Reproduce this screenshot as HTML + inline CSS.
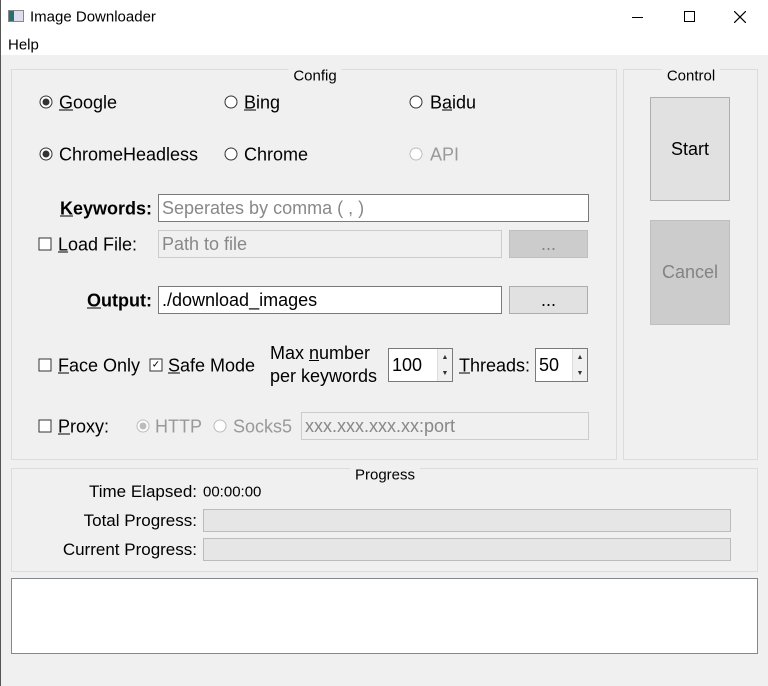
<!DOCTYPE html>
<html><head><style>
*{box-sizing:border-box;margin:0;padding:0}
body{width:768px;height:686px;background:#f0f0f0;font-family:"Liberation Sans",sans-serif;font-size:18px;color:#000;position:relative;overflow:hidden}
.a{position:absolute;white-space:nowrap}
.t{transform:translateY(-50%)}
.grp{position:absolute;border:1px solid #dcdcdc}
.gt{position:absolute;background:#f0f0f0;font-size:15px;padding:0 5px;transform:translate(-50%,-50%)}
.rad{position:absolute;width:13px;height:13px;border:1px solid #333;border-radius:50%;background:#fff;transform:translate(-50%,-50%)}
.rad.on::after{content:"";position:absolute;left:2px;top:2px;width:7px;height:7px;border-radius:50%;background:#333}
.rad.dis{border-color:#bcbcbc}
.rad.dis.on::after{background:#bcbcbc}
.chk{position:absolute;width:13px;height:13px;border:1px solid #333;background:#fff;transform:translate(-50%,-50%)}
.inp{position:absolute;background:#fff;border:1px solid #7a7a7a;padding-left:3px;display:flex;align-items:center}
.inp.dis{background:#f0f0f0;border-color:#ccc;color:#888}
.btn{position:absolute;background:#e1e1e1;border:1px solid #adadad;display:flex;align-items:center;justify-content:center}
.btn.dis{background:#ccc;border-color:#bfbfbf;color:#838383}
.bar{position:absolute;background:#e6e6e6;border:1px solid #bcbcbc;left:203px;width:528px;height:23px}
u{text-decoration:underline}
.sp{position:absolute;right:0;top:0;width:15px;height:100%;border-left:1px solid #ddd;font-size:7px;color:#333;display:flex;flex-direction:column;align-items:center;justify-content:space-around;background:#f0f0f0}
</style></head><body>
<div class="a" style="left:0;top:0;width:768px;height:55px;background:#fff"></div>
<div class="a" style="left:0;top:0;width:1px;height:686px;background:#555"></div>
<div class="a" style="left:8px;top:10px;width:16px;height:12px;border:1px solid #888;background:linear-gradient(90deg,#2a6f6f 0 5px,#dde 5px)"></div>
<div class="a t" style="left:30px;top:17px;font-size:15px">Image Downloader</div>
<div class="a" style="left:632px;top:17px;width:11px;height:1px;background:#000"></div>
<div class="a" style="left:684px;top:11px;width:11px;height:11px;border:1px solid #000"></div>
<svg class="a" style="left:734px;top:11px" width="12" height="12"><path d="M0 0L12 12M12 0L0 12" stroke="#000" stroke-width="1.2"/></svg>
<div class="a t" style="left:8px;top:45px;font-size:15px">Help</div>

<div class="grp" style="left:11px;top:69px;width:606px;height:391px"></div>
<div class="gt" style="left:315px;top:76px">Config</div>
<div class="grp" style="left:623px;top:69px;width:135px;height:391px"></div>
<div class="gt" style="left:691px;top:76px">Control</div>
<div class="btn" style="left:650px;top:97px;width:80px;height:104px">Start</div>
<div class="btn dis" style="left:650px;top:220px;width:80px;height:105px">Cancel</div>

<div class="rad on" style="left:46px;top:102px"></div><div class="a t" style="left:59px;top:103px"><u>G</u>oogle</div>
<div class="rad" style="left:231px;top:102px"></div><div class="a t" style="left:244px;top:103px"><u>B</u>ing</div>
<div class="rad" style="left:416px;top:102px"></div><div class="a t" style="left:430px;top:103px">B<u>a</u>idu</div>
<div class="rad on" style="left:46px;top:154px"></div><div class="a t" style="left:59px;top:155px">ChromeHeadless</div>
<div class="rad" style="left:231px;top:154px"></div><div class="a t" style="left:244px;top:155px">Chrome</div>
<div class="rad dis" style="left:416px;top:154px"></div><div class="a t" style="left:430px;top:155px;color:#999">API</div>

<div class="a t" style="right:616px;top:209px;font-weight:bold"><u>K</u>eywords:</div>
<div class="inp" style="left:158px;top:194px;width:431px;height:28px;color:#888">Seperates by comma ( , )</div>
<div class="chk" style="left:45px;top:244px"></div><div class="a t" style="left:58px;top:245px"><u>L</u>oad File:</div>
<div class="inp dis" style="left:158px;top:230px;width:344px;height:28px">Path to file</div>
<div class="btn dis" style="left:509px;top:230px;width:79px;height:28px">...</div>
<div class="a t" style="right:616px;top:301px;font-weight:bold"><u>O</u>utput:</div>
<div class="inp" style="left:158px;top:286px;width:344px;height:28px">./download_images</div>
<div class="btn" style="left:509px;top:286px;width:79px;height:28px">...</div>

<div class="chk" style="left:45px;top:365px"></div><div class="a t" style="left:58px;top:366px"><u>F</u>ace Only</div>
<div class="chk" style="left:156px;top:365px;font-size:10px;line-height:11px;text-align:center">✓</div><div class="a t" style="left:168px;top:366px"><u>S</u>afe Mode</div>
<div class="a" style="left:270px;top:342px;line-height:23px">Max <u>n</u>umber<br>per keywords</div>
<div class="inp" style="left:388px;top:348px;width:65px;height:34px">100<div class="sp"><span>▲</span><span>▼</span></div></div>
<div class="a t" style="left:459px;top:366px"><u>T</u>hreads:</div>
<div class="inp" style="left:535px;top:348px;width:53px;height:34px">50<div class="sp"><span>▲</span><span>▼</span></div></div>

<div class="chk" style="left:45px;top:426px"></div><div class="a t" style="left:58px;top:427px"><u>P</u>roxy:</div>
<div class="rad dis on" style="left:143px;top:426px"></div><div class="a t" style="left:155px;top:427px;color:#999">HTTP</div>
<div class="rad dis" style="left:220px;top:426px"></div><div class="a t" style="left:233px;top:427px;color:#999">Socks5</div>
<div class="inp dis" style="left:301px;top:412px;width:288px;height:28px">xxx.xxx.xxx.xx:port</div>

<div class="grp" style="left:11px;top:468px;width:747px;height:104px"></div>
<div class="gt" style="left:385px;top:475px">Progress</div>
<div class="a t" style="right:571px;top:492px;font-size:17px">Time Elapsed:</div>
<div class="a t" style="left:203px;top:492px;font-size:15px">00:00:00</div>
<div class="a t" style="right:571px;top:521px;font-size:17px">Total Progress:</div>
<div class="bar" style="top:509px"></div>
<div class="a t" style="right:571px;top:550px;font-size:17px">Current Progress:</div>
<div class="bar" style="top:538px"></div>

<div class="a" style="left:11px;top:578px;width:747px;height:76px;background:#fff;border:1px solid #828790"></div>
</body></html>
